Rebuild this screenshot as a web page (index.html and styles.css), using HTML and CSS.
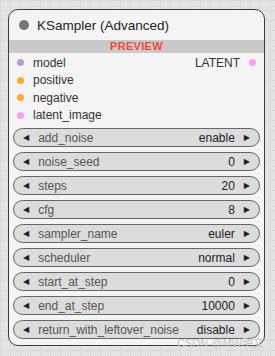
FILE: index.html
```html
<!DOCTYPE html>
<html lang="zh">
<head>
    <meta charset="UTF-8">
    <meta name="viewport" content="width=device-width, initial-scale=1.0">
    <title>KSampler (Advanced)</title>
    <link rel="stylesheet" href="styles.css">
</head>
<body>
    <div class="canvas">
        <div class="node">
            <div class="node-title">
                <span class="title-dot"></span>
                <span>KSampler (Advanced)</span>
            </div>
            <div class="preview">PREVIEW</div>

            <div class="slots">
                <div class="slot-row">
                    <div class="slot"><span class="dot model"></span>model</div>
                    <div class="slot out">LATENT<span class="dot latent"></span></div>
                </div>
                <div class="slot-row">
                    <div class="slot"><span class="dot cond"></span>positive</div>
                </div>
                <div class="slot-row">
                    <div class="slot"><span class="dot cond"></span>negative</div>
                </div>
                <div class="slot-row">
                    <div class="slot"><span class="dot latent"></span>latent_image</div>
                </div>
            </div>

            <div class="widgets">
                <div class="widget"><span class="arrow">&#9664;</span><span class="w-label">add_noise</span><span class="w-value">enable</span><span class="arrow">&#9654;</span></div>
                <div class="widget"><span class="arrow">&#9664;</span><span class="w-label">noise_seed</span><span class="w-value">0</span><span class="arrow">&#9654;</span></div>
                <div class="widget"><span class="arrow">&#9664;</span><span class="w-label">steps</span><span class="w-value">20</span><span class="arrow">&#9654;</span></div>
                <div class="widget"><span class="arrow">&#9664;</span><span class="w-label">cfg</span><span class="w-value">8</span><span class="arrow">&#9654;</span></div>
                <div class="widget"><span class="arrow">&#9664;</span><span class="w-label">sampler_name</span><span class="w-value">euler</span><span class="arrow">&#9654;</span></div>
                <div class="widget"><span class="arrow">&#9664;</span><span class="w-label">scheduler</span><span class="w-value">normal</span><span class="arrow">&#9654;</span></div>
                <div class="widget"><span class="arrow">&#9664;</span><span class="w-label">start_at_step</span><span class="w-value">0</span><span class="arrow">&#9654;</span></div>
                <div class="widget"><span class="arrow">&#9664;</span><span class="w-label">end_at_step</span><span class="w-value">10000</span><span class="arrow">&#9654;</span></div>
                <div class="widget"><span class="arrow">&#9664;</span><span class="w-label">return_with_leftover_noise</span><span class="w-value">disable</span><span class="arrow">&#9654;</span></div>
            </div>
        </div>
        <div class="watermark">CSDN @MW明文</div>
    </div>
</body>
</html>
```

FILE: styles.css
```css
body {
    margin: 0;
    padding: 0;
    font-family: "Liberation Sans", "Noto Sans CJK SC", sans-serif;
    background-color: #e3e3e3;
}
.canvas {
    position: relative;
    width: 275px;
    height: 356px;
    padding: 9px 0 0 8px;
    box-sizing: border-box;
    background-color: #e3e3e3;
    background-image:
        linear-gradient(to right, #d9d9d9 1px, transparent 1px),
        linear-gradient(to bottom, #d9d9d9 1px, transparent 1px);
    background-size: 10px 10px;
}
.node {
    width: 257px;
    height: 337px;
    box-sizing: border-box;
    border: 1.5px solid #3a3a3a;
    border-radius: 10px;
    background: #f4f4f4;
    overflow: hidden;
}
.node-title {
    height: 30px;
    display: flex;
    align-items: center;
    padding-left: 10px;
    font-size: 13.5px;
    color: #222;
}
.title-dot {
    width: 10px;
    height: 10px;
    border-radius: 50%;
    background: #777;
    margin-right: 8px;
}
.preview {
    height: 13px;
    line-height: 13px;
    background: #c9c9c9;
    color: #f2493a;
    font-size: 11px;
    font-weight: bold;
    text-align: center;
    letter-spacing: 0.3px;
}
.slots {
    padding-top: 1px;
}
.slot-row {
    height: 17.5px;
    display: flex;
    justify-content: space-between;
    align-items: center;
    font-size: 12px;
    color: #333;
}
.slot {
    display: flex;
    align-items: center;
}
.slot .dot {
    margin: 0 9px 0 8px;
}
.slot.out .dot {
    margin: 0 8px 0 9px;
}
.dot {
    width: 7px;
    height: 7px;
    border-radius: 50%;
}
.dot.model { background: #b39ddb; }
.dot.cond { background: #ffa931; }
.dot.latent { background: #ff9cf9; }
.widgets {
    display: flex;
    flex-direction: column;
    gap: 5px;
    padding: 4px 4px 0 4px;
}
.widget {
    height: 19px;
    box-sizing: border-box;
    border: 1px solid #666;
    border-radius: 10px;
    background: #dcdcdc;
    display: flex;
    align-items: center;
    padding: 0 9px 0 9px;
    font-size: 12px;
    color: #444;
}
.arrow {
    font-size: 8px;
    color: #222;
    font-family: "DejaVu Sans", sans-serif;
}
.w-label {
    margin-left: 9px;
    flex: 1;
    color: #555;
}
.w-value {
    margin-right: 9px;
    color: #222;
}
.watermark {
    position: absolute;
    right: 11px;
    bottom: 6px;
    font-size: 11px;
    color: #c4c4c4;
}
```
